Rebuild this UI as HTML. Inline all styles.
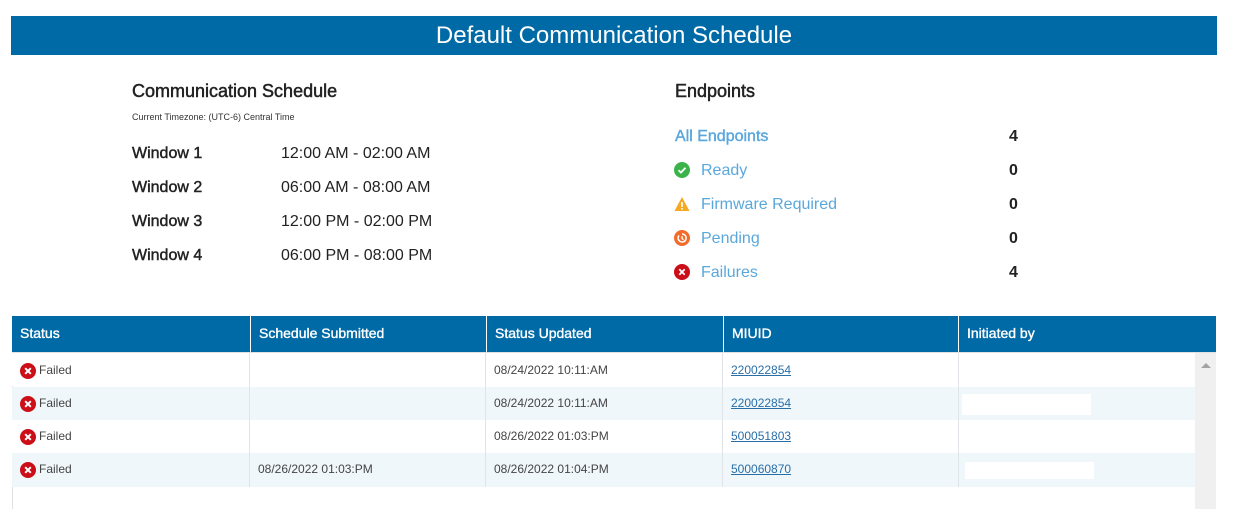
<!DOCTYPE html>
<html><head><meta charset="utf-8"><style>
*{margin:0;padding:0;box-sizing:border-box}
body{width:1234px;height:509px;background:#fff;font-family:"Liberation Sans",Arial,sans-serif;position:relative;overflow:hidden;color:#222}
.a{position:absolute;white-space:nowrap}
.hdr{left:11px;top:16px;width:1206px;height:39px;background:#006aa6;color:#fff;font-size:24px;text-align:center;line-height:39px}
.h2{font-size:18px;color:#222;-webkit-text-stroke:0.5px #222}
.win{font-size:16px;color:#222;-webkit-text-stroke:0.45px #222}
.tm{font-size:16px;color:#222}
.ep{font-size:16px;color:#5aa7dc}
.cnt{font-size:16px;font-weight:bold;color:#222}
.th{top:316px;height:36px;background:#006aa6;color:#fff;font-size:14px;line-height:34px;padding-left:8px;-webkit-text-stroke:0.35px #fff}
.row{left:12px;width:1183px;height:33px}
.cell{font-size:12px;color:#444;line-height:33px}
.lnk{color:#2a6ea6;text-decoration:underline}
.vl{position:absolute;top:353px;height:134px;width:1px;background:#e0e4e8}
</style></head><body>
<div class="a hdr">Default Communication Schedule</div>

<div class="a h2" style="left:132px;top:81px">Communication Schedule</div>
<div class="a" style="left:132px;top:112px;font-size:9px;color:#333">Current Timezone: (UTC-6) Central Time</div>
<div class="a win" style="left:132px;top:145px">Window 1</div><div class="a tm" style="left:281px;top:145px">12:00 AM - 02:00 AM</div>
<div class="a win" style="left:132px;top:179px">Window 2</div><div class="a tm" style="left:281px;top:179px">06:00 AM - 08:00 AM</div>
<div class="a win" style="left:132px;top:213px">Window 3</div><div class="a tm" style="left:281px;top:213px">12:00 PM - 02:00 PM</div>
<div class="a win" style="left:132px;top:247px">Window 4</div><div class="a tm" style="left:281px;top:247px">06:00 PM - 08:00 PM</div>

<div class="a h2" style="left:675px;top:81px">Endpoints</div>
<div class="a ep" style="left:675px;top:128px;-webkit-text-stroke:0.4px #5aa7dc">All Endpoints</div><div class="a cnt" style="left:1009px;top:128px">4</div>
<svg class="a" style="left:674px;top:162px" width="16" height="16"><circle cx="8" cy="8" r="8" fill="#3bb34a"/><path d="M4.5 8.2l2.4 2.4 4.6-4.8" stroke="#fff" stroke-width="1.8" fill="none"/></svg>
<div class="a ep" style="left:701px;top:162px">Ready</div><div class="a cnt" style="left:1009px;top:162px">0</div>
<svg class="a" style="left:674px;top:196px" width="16" height="16"><path d="M8 1L15.5 15H0.5Z" fill="#f7a823"/><rect x="7.2" y="6" width="1.6" height="5" fill="#fff"/><rect x="7.2" y="12" width="1.6" height="1.6" fill="#fff"/></svg>
<div class="a ep" style="left:701px;top:196px">Firmware Required</div><div class="a cnt" style="left:1009px;top:196px">0</div>
<svg class="a" style="left:674px;top:230px" width="16" height="16"><circle cx="8" cy="8" r="8" fill="#f26b2a"/><path d="M5 5.5A4 4 0 1 0 8 4" stroke="#fff" stroke-width="1.5" fill="none"/><path d="M8 6v2.5l1.5 1.2" stroke="#fff" stroke-width="1.3" fill="none"/></svg>
<div class="a ep" style="left:701px;top:230px">Pending</div><div class="a cnt" style="left:1009px;top:230px">0</div>
<svg class="a" style="left:674px;top:264px" width="16" height="16"><circle cx="8" cy="8" r="8" fill="#cc0e18"/><path d="M5.3 5.3l5.4 5.4M10.7 5.3l-5.4 5.4" stroke="#fff" stroke-width="1.8"/></svg>
<div class="a ep" style="left:701px;top:264px">Failures</div><div class="a cnt" style="left:1009px;top:264px">4</div>

<div class="a" style="left:12px;top:351px;width:1204px;height:2px;background:#e2e2e2"></div>
<div class="a th" style="left:12px;width:238px">Status</div>
<div class="a th" style="left:251px;width:235px">Schedule Submitted</div>
<div class="a th" style="left:487px;width:236px">Status Updated</div>
<div class="a th" style="left:724px;width:234px">MIUID</div>
<div class="a th" style="left:959px;width:257px">Initiated by</div>

<div class="a" style="left:12px;top:353px;width:1px;height:156px;background:#e0e0e0"></div>
<div class="a row" style="top:353px;background:#fff"></div>
<div class="a row" style="top:387px;background:#f0f7fb"></div>
<div class="a row" style="top:420px;background:#fff"></div>
<div class="a row" style="top:453px;background:#f0f7fb;height:34px"></div>
<div class="vl" style="left:249px"></div><div class="vl" style="left:485px"></div><div class="vl" style="left:722px"></div><div class="vl" style="left:958px"></div>
<div class="a" style="left:962px;top:394px;width:129px;height:21px;background:#fff"></div>
<div class="a" style="left:965px;top:462px;width:129px;height:17px;background:#fff"></div>
<div class="a" style="left:1195px;top:353px;width:21px;height:156px;background:#f0f0f0"></div>
<svg class="a" style="left:1200px;top:362px" width="12" height="8"><path d="M1 6L6 1L11 6Z" fill="#a3a3a3"/></svg>

<svg class="a" style="left:20px;top:363px" width="16" height="16"><circle cx="8" cy="8" r="8" fill="#cc0e18"/><path d="M5.2 5.2l5.6 5.6M10.8 5.2l-5.6 5.6" stroke="#fff" stroke-width="2"/></svg>
<svg class="a" style="left:20px;top:396px" width="16" height="16"><circle cx="8" cy="8" r="8" fill="#cc0e18"/><path d="M5.2 5.2l5.6 5.6M10.8 5.2l-5.6 5.6" stroke="#fff" stroke-width="2"/></svg>
<svg class="a" style="left:20px;top:429px" width="16" height="16"><circle cx="8" cy="8" r="8" fill="#cc0e18"/><path d="M5.2 5.2l5.6 5.6M10.8 5.2l-5.6 5.6" stroke="#fff" stroke-width="2"/></svg>
<svg class="a" style="left:20px;top:462px" width="16" height="16"><circle cx="8" cy="8" r="8" fill="#cc0e18"/><path d="M5.2 5.2l5.6 5.6M10.8 5.2l-5.6 5.6" stroke="#fff" stroke-width="2"/></svg>
<span class="a cell" style="left:39px;top:354px">Failed</span>
<span class="a cell" style="left:39px;top:387px">Failed</span>
<span class="a cell" style="left:39px;top:420px">Failed</span>
<span class="a cell" style="left:39px;top:453px">Failed</span>

<span class="a cell" style="left:258px;top:453px">08/26/2022 01:03:PM</span>
<span class="a cell" style="left:494px;top:354px">08/24/2022 10:11:AM</span>
<span class="a cell" style="left:494px;top:387px">08/24/2022 10:11:AM</span>
<span class="a cell" style="left:494px;top:420px">08/26/2022 01:03:PM</span>
<span class="a cell" style="left:494px;top:453px">08/26/2022 01:04:PM</span>
<span class="a cell lnk" style="left:731px;top:354px">220022854</span>
<span class="a cell lnk" style="left:731px;top:387px">220022854</span>
<span class="a cell lnk" style="left:731px;top:420px">500051803</span>
<span class="a cell lnk" style="left:731px;top:453px">500060870</span>
</body></html>
